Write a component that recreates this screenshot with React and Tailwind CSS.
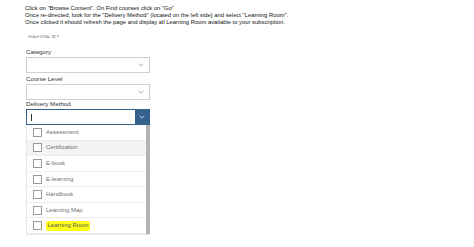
import React from "react";

const items = ["Assessment", "Certification", "E-book", "E-learning", "Handbook", "Learning Map", "Learning Room"];

function Chevron({ color = "#8a8a8a" }) {
  return (
    <svg width="6" height="4" viewBox="0 0 6 4" fill="none">
      <path d="M0.6 0.8 L3 3.1 L5.4 0.8" stroke={color} strokeWidth="0.7" />
    </svg>
  );
}

export default function App() {
  return (
    <div className="w-[474px] h-[247px] bg-white overflow-hidden relative" style={{ fontFamily: '"Liberation Sans", Arial, sans-serif' }}>
      <div className="pl-[25px] pt-[5px] text-[5.85px] leading-[7px] text-[#111]">
        <div>Click on "Browse Content". On Find courses click on "Go"</div>
        <div>Once re-directed, look for the "Delivery Method" (located on the left side) and select "Learning Room".</div>
        <div>Once clicked it should refresh the page and display all Learning Room available to your subscription.</div>
      </div>
      <div className="ml-[26px] w-[124px] flex flex-col mt-[9px]">
        <div className="h-[5px] overflow-hidden">
          <div className="mt-[-2.5px] pl-[2px] text-[6px] leading-[7px] uppercase text-[#8a8a8a]">Refine By</div>
        </div>
        <div className="mt-[8px] h-[8px] flex items-center text-[6.2px] text-[#333]">Category</div>
        <div className="mt-[1px] h-[16px] border border-[#cfcfcf] flex items-center justify-end pr-[5px]">
          <Chevron />
        </div>
        <div className="mt-[2px] h-[8px] flex items-center text-[6.2px] text-[#333]">Course Level</div>
        <div className="mt-[1px] h-[16px] border border-[#cfcfcf] flex items-center justify-end pr-[5px]">
          <Chevron />
        </div>
        <div className="h-[8px] flex items-center text-[6.2px] text-[#333]">Delivery Method</div>
        <div className="mt-[1px] h-[16px] flex border border-[#34618e]">
          <div className="flex-1 flex items-center pl-[4px]">
            <div className="w-[0.6px] h-[7px] bg-[#333]" />
          </div>
          <div className="w-[14px] bg-[#34618e] flex items-center justify-center">
            <Chevron color="#ffffff" />
          </div>
        </div>
        <div className="h-[110px] flex border-l border-b border-[#e6e6e6]">
          <div className="flex-1 flex flex-col">
            {items.map((it, i) => (
              <div key={it} className={`h-[15.6px] flex items-center pl-[6px] gap-[4px] border-b border-[#ededed] ${i === 1 ? "bg-[#f4f4f4]" : "bg-white"}`}>
                <div className="w-[9px] h-[9px] border border-[#9a9a9a] bg-white shrink-0" />
                {it === "Learning Room" ? (
                  <span className="text-[6px] text-[#555] bg-[#ffff1a] rounded-[2px] px-[1.5px] py-[0.5px]">Learning Room</span>
                ) : (
                  <span className="text-[6px] text-[#707070]">{it}</span>
                )}
              </div>
            ))}
          </div>
          <div className="w-[4px] bg-[#b3b3b3]" />
        </div>
      </div>
    </div>
  );
}
